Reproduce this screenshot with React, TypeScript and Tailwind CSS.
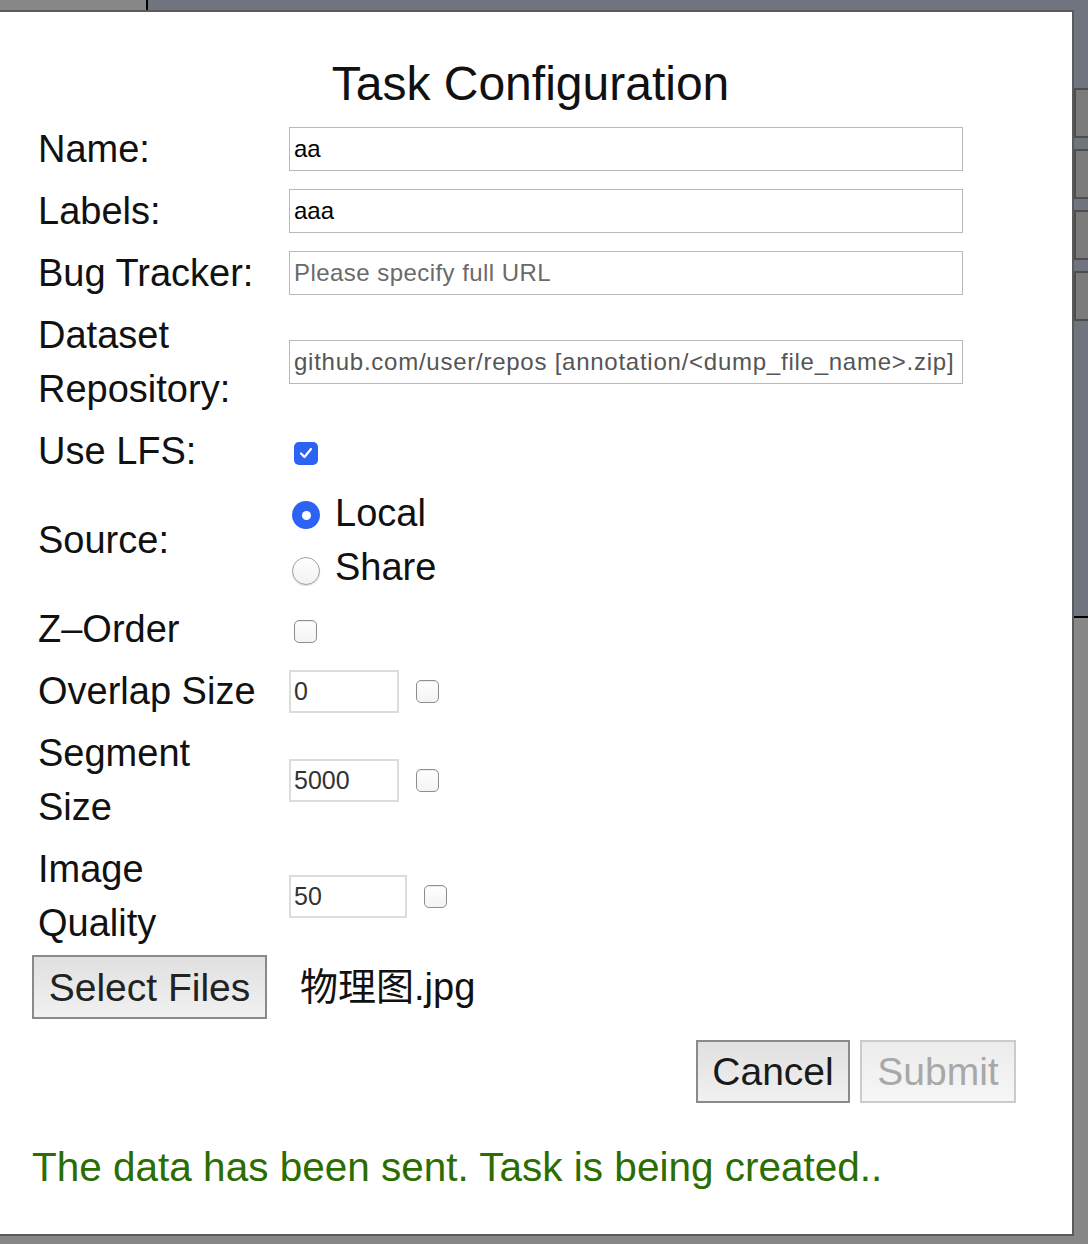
import React from "react";

const font = { fontFamily: '"Liberation Sans", Arial, "Noto Sans CJK SC", sans-serif' };

function Label({ children }: { children: React.ReactNode }) {
  return <div className="w-[251px] shrink-0 text-[38px] leading-[54px] text-[#111]">{children}</div>;
}

function Check({ checked = false }: { checked?: boolean }) {
  if (checked) {
    return (
      <span className="flex h-[23px] w-[24px] items-center justify-center rounded-[5px] bg-[#2c63f5]">
        <svg width="14" height="12" viewBox="0 0 14 12" fill="none">
          <path d="M2 6.5 L5.5 10 L12 2" stroke="white" strokeWidth="2.2" strokeLinecap="round" strokeLinejoin="round" />
        </svg>
      </span>
    );
  }
  return (
    <span className="block h-[23px] w-[23px] rounded-[5px] border border-[#8e8e8e] bg-gradient-to-b from-white to-[#f3f3f3] shadow-[inset_0_1px_1px_rgba(0,0,0,0.08)]" />
  );
}

function Radio({ checked = false }: { checked?: boolean }) {
  if (checked) {
    return (
      <span className="flex h-[28px] w-[28px] items-center justify-center rounded-full bg-[#2c63f5]">
        <span className="block h-[9px] w-[9px] rounded-full bg-white" />
      </span>
    );
  }
  return (
    <span className="block h-[28px] w-[28px] rounded-full border border-[#a0a0a0] bg-gradient-to-b from-white to-[#f2f2f2] shadow-[0_1px_1px_rgba(0,0,0,0.15)]" />
  );
}

function TextInput({ value, placeholder, extra }: { value?: string; placeholder?: string; extra?: string }) {
  return (
    <input
      readOnly
      defaultValue={value}
      placeholder={placeholder}
      style={font}
      className={
        "h-[44px] w-[674px] border border-[#b8b8b8] bg-white px-[4px] text-[24px] text-black outline-none placeholder:text-[#6a6a6a] " +
        (extra ?? "")
      }
    />
  );
}

function NumInput({ value, width }: { value: string; width: string }) {
  return (
    <input
      readOnly
      defaultValue={value}
      style={font}
      className={
        "h-[43px] border-2 border-[#dcdcdc] bg-white px-[3px] text-[25px] text-[#333] outline-none " + width
      }
    />
  );
}

export default function App() {
  return (
    <div className="relative h-[1244px] w-[1088px] overflow-hidden bg-[#878787]" style={font}>
      {/* background page */}
      <div className="flex h-full w-full items-start">
        <div className="h-full w-[146px] bg-[#878787]" />
        <div className="h-[14px] w-[2px] bg-black" />
        <div className="flex h-full flex-1 flex-col">
          <div className="flex h-[616px] flex-col items-end bg-[#70747e] pt-[88px]">
            <div className="mb-[11px] h-[50px] w-[14px] border-2 border-r-0 border-[#4e4e4e] bg-[#7b7b7b]" />
            <div className="mb-[11px] h-[50px] w-[14px] border-2 border-r-0 border-[#4e4e4e] bg-[#7b7b7b]" />
            <div className="mb-[11px] h-[50px] w-[14px] border-2 border-r-0 border-[#4e4e4e] bg-[#7b7b7b]" />
            <div className="mb-[11px] h-[50px] w-[14px] border-2 border-r-0 border-[#4e4e4e] bg-[#7b7b7b]" />
          </div>
          <div className="h-[2px] bg-black" />
          <div className="flex-1 bg-[#878787]" />
        </div>
      </div>

      {/* modal */}
      <div className="absolute left-[-2px] top-[10px] h-[1226px] w-[1076px] border-2 border-[#5b5b5b] bg-white">
        <div className="pr-[11px] pt-[45px] text-center text-[48px] leading-[54px] text-[#111]">Task Configuration</div>

        <div className="mt-[11px] flex flex-col gap-[8px] pl-[38px]">
          <div className="flex items-center">
            <Label>Name:</Label>
            <TextInput value="aa" />
          </div>
          <div className="flex items-center">
            <Label>Labels:</Label>
            <TextInput value="aaa" />
          </div>
          <div className="flex items-center">
            <Label>Bug Tracker:</Label>
            <TextInput placeholder="Please specify full URL" extra="placeholder:tracking-[0.45px]" />
          </div>
          <div className="flex items-center">
            <Label>
              Dataset
              <br />
              Repository:
            </Label>
            <TextInput
              placeholder="github.com/user/repos [annotation/<dump_file_name>.zip]"
              extra="h-[43px] placeholder:text-[#555] placeholder:tracking-[0.75px]"
            />
          </div>
          <div className="flex items-center">
            <Label>Use LFS:</Label>
            <span className="ml-[5px] mt-[4px]">
              <Check checked />
            </span>
          </div>
          <div className="flex items-center">
            <Label>Source:</Label>
            <div className="flex flex-col">
              <div className="flex items-center text-[38px] leading-[54px] text-[#111]">
                <span className="ml-[3px] mr-[15px] mt-[4px]">
                  <Radio checked />
                </span>
                Local
              </div>
              <div className="flex items-center text-[38px] leading-[54px] text-[#111]">
                <span className="ml-[3px] mr-[15px] mt-[8px]">
                  <Radio />
                </span>
                Share
              </div>
            </div>
          </div>
          <div className="flex items-center">
            <Label>Z–Order</Label>
            <span className="ml-[5px] mt-[4px]">
              <Check />
            </span>
          </div>
          <div className="flex items-center">
            <Label>Overlap Size</Label>
            <NumInput value="0" width="w-[110px]" />
            <span className="ml-[17px] mt-[1px]">
              <Check />
            </span>
          </div>
          <div className="flex items-center">
            <Label>
              Segment
              <br />
              Size
            </Label>
            <NumInput value="5000" width="w-[110px]" />
            <span className="ml-[17px] mt-[1px]">
              <Check />
            </span>
          </div>
          <div className="flex items-center">
            <Label>
              Image
              <br />
              Quality
            </Label>
            <NumInput value="50" width="w-[118px]" />
            <span className="ml-[17px] mt-[1px]">
              <Check />
            </span>
          </div>
          <div className="-ml-[6px] -mt-[3px] flex items-center">
            <button
              style={font}
              className="h-[64px] w-[235px] border-2 border-[#8a8a8a] bg-gradient-to-b from-[#e0e0e0] to-[#f1f1f1] text-[39px] leading-none text-[#222]"
            >
              Select Files
            </button>
            <span className="ml-[33px] text-[38px] leading-[54px] text-[#111]">物理图.jpg</span>
          </div>
        </div>

        <div className="mt-[21px] flex justify-end gap-[10px] pr-[56px]">
          <button
            style={font}
            className="h-[63px] w-[154px] border-2 border-[#8a8a8a] bg-gradient-to-b from-[#e0e0e0] to-[#f1f1f1] text-[39px] leading-none text-[#1a1a1a]"
          >
            Cancel
          </button>
          <button
            style={font}
            className="h-[63px] w-[156px] border-2 border-[#cbcbcb] bg-gradient-to-b from-[#ececec] to-[#f6f6f6] text-[39px] leading-none text-[#a8a8a8]"
          >
            Submit
          </button>
        </div>

        <div className="mt-[37px] pl-[32px] text-[40.5px] leading-[54px] text-[#2b6d00]">
          The data has been sent. Task is being created..
        </div>
      </div>
    </div>
  );
}
